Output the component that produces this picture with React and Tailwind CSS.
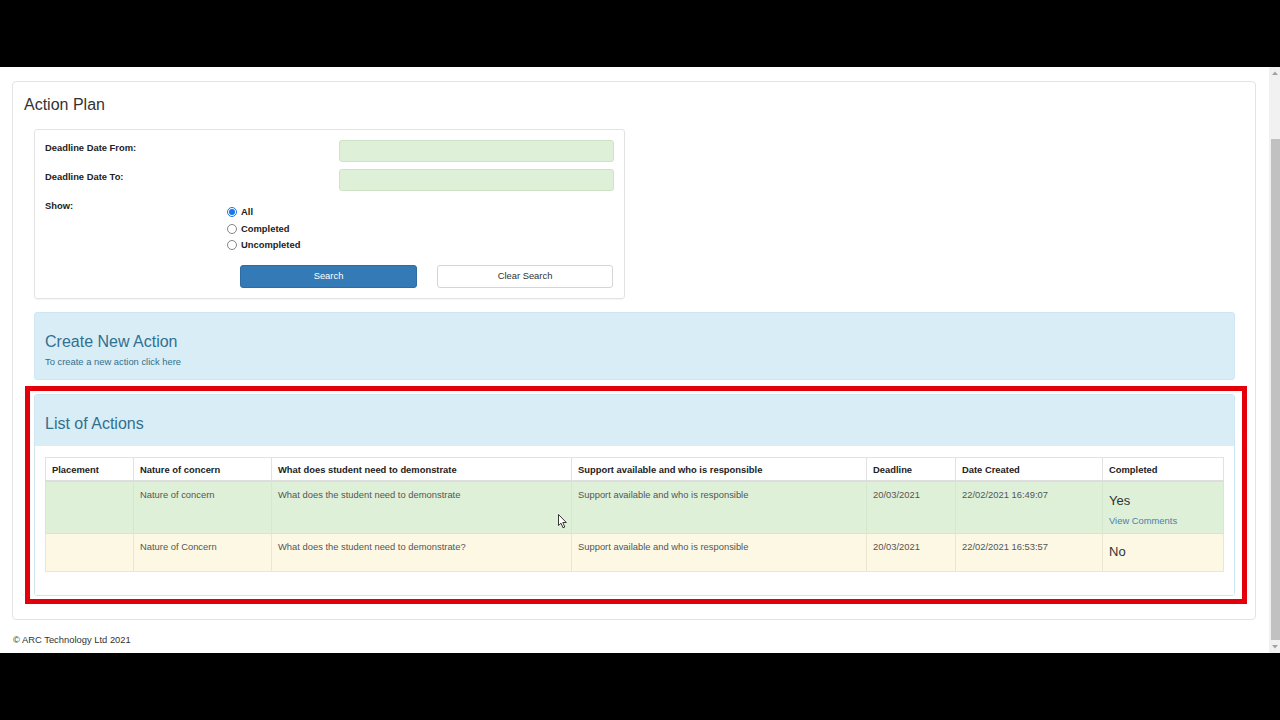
import React from "react";

function Radio({ checked, label }) {
  return (
    <div className="flex items-center h-[16.5px]">
      {checked ? (
        <span className="w-[10px] h-[10px] rounded-full border border-[#1a73e8] bg-white flex items-center justify-center">
          <span className="w-[6px] h-[6px] rounded-full bg-[#1a73e8]" />
        </span>
      ) : (
        <span className="w-[10px] h-[10px] rounded-full border border-[#858585] bg-white" />
      )}
      <span className="ml-[4px] text-[9.4px] font-bold text-[#222]">{label}</span>
    </div>
  );
}

export default function App() {
  const font = { fontFamily: '"Liberation Sans", Arial, sans-serif' };
  const headers = [
    "Placement",
    "Nature of concern",
    "What does student need to demonstrate",
    "Support available and who is responsible",
    "Deadline",
    "Date Created",
    "Completed",
  ];
  return (
    <div className="w-[1280px] h-[720px] bg-black flex flex-col overflow-hidden" style={font}>
      <div className="h-[67px] bg-black shrink-0" />
      <div className="h-[586px] bg-white flex shrink-0 overflow-hidden">
        <div className="flex-1 relative">
          <div className="mt-[14px] ml-[12px] mr-[13px] border border-[#e3e3e3] rounded-[4px] pl-[11px] pr-[11px] pt-[13px] pb-[23px]">
            <h1 className="text-[16px] leading-[20px] text-[#333]">Action Plan</h1>
            <div className="pl-[10px] pr-[9px]">
              {/* filter */}
              <div className="mt-[14px] w-[591px] border border-[#e3e3e3] rounded-[3px] shadow-[0_1px_1px_rgba(0,0,0,0.04)] pl-[10px] pt-[10px] pb-[10px]">
                <div className="flex items-start">
                  <div className="w-[294px] pt-[1px] text-[9.4px] font-bold text-[#222] leading-[14px]">Deadline Date From:</div>
                  <div className="w-[275px] h-[22px] bg-[#dff0d8] border border-[#cfe2c6] rounded-[3px]" />
                </div>
                <div className="flex items-start mt-[7px]">
                  <div className="w-[294px] pt-[1px] text-[9.4px] font-bold text-[#222] leading-[14px]">Deadline Date To:</div>
                  <div className="w-[275px] h-[22px] bg-[#dff0d8] border border-[#cfe2c6] rounded-[3px]" />
                </div>
                <div className="flex items-start mt-[7px]">
                  <div className="w-[182px] pt-[1px] text-[9.4px] font-bold text-[#222] leading-[14px]">Show:</div>
                  <div className="pt-[6px] flex flex-col">
                    <Radio checked label="All" />
                    <Radio label="Completed" />
                    <Radio label="Uncompleted" />
                  </div>
                </div>
                <div className="flex ml-[195px] mt-[11px] gap-[20px]">
                  <div className="w-[177px] h-[23px] bg-[#337ab7] border border-[#2e6da4] rounded-[3px] flex items-center justify-center text-[9.4px] text-white">Search</div>
                  <div className="w-[176px] h-[23px] bg-white border border-[#d5d5d5] rounded-[3px] flex items-center justify-center text-[9.4px] text-[#333]">Clear Search</div>
                </div>
              </div>

              {/* create */}
              <div className="mt-[13px] h-[68px] bg-[#d9edf7] border border-[#cfe6f2] rounded-[3px] pl-[10px] pt-[19px]">
                <div className="text-[16px] leading-[20px] text-[#31708f]">Create New Action</div>
                <div className="mt-[3px] text-[9.4px] leading-[14px] text-[#31708f]">To create a new action click here</div>
              </div>

              {/* list */}
              <div className="relative mt-[14px]">
                <div className="border border-[#cfe6f2] rounded-[3px] overflow-hidden">
                  <div className="h-[51px] bg-[#d9edf7] pl-[10px] pt-[19px]">
                    <div className="text-[16px] leading-[20px] text-[#31708f]">List of Actions</div>
                  </div>
                  <div className="px-[10px] pt-[11px] pb-[23px] bg-white">
                    <table className="w-[1178px] table-fixed border-collapse text-[9.4px]">
                      <colgroup>
                        <col className="w-[88px]" />
                        <col className="w-[138px]" />
                        <col className="w-[300px]" />
                        <col className="w-[295px]" />
                        <col className="w-[89px]" />
                        <col className="w-[147px]" />
                        <col className="w-[121px]" />
                      </colgroup>
                      <thead>
                        <tr className="h-[24px] bg-white">
                          {headers.map((h) => (
                            <th key={h} className="border border-[#e2e2e2] border-b-2 border-b-[#dddddd] px-[6px] pt-[2px] text-left font-bold text-[#222] align-middle leading-[14px]">{h}</th>
                          ))}
                        </tr>
                      </thead>
                      <tbody>
                        <tr className="h-[52px] bg-[#dff0d8] text-[#555]">
                          <td className="border border-[#d6e6cf] px-[6px] pt-[6px] align-top"></td>
                          <td className="border border-[#d6e6cf] px-[6px] pt-[6px] align-top leading-[14px]">Nature of concern</td>
                          <td className="border border-[#d6e6cf] px-[6px] pt-[6px] align-top leading-[14px]">What does the student need to demonstrate</td>
                          <td className="border border-[#d6e6cf] px-[6px] pt-[6px] align-top leading-[14px]">Support available and who is responsible</td>
                          <td className="border border-[#d6e6cf] px-[6px] pt-[6px] align-top leading-[14px]">20/03/2021</td>
                          <td className="border border-[#d6e6cf] px-[6px] pt-[6px] align-top leading-[14px]">22/02/2021 16:49:07</td>
                          <td className="border border-[#d6e6cf] px-[6px] pt-[6px] align-top">
                            <div className="mt-[4px] text-[13px] leading-[18px] text-[#333]">Yes</div>
                            <div className="mt-[4px] text-[9.4px] leading-[14px] text-[#4a7fae]">View Comments</div>
                          </td>
                        </tr>
                        <tr className="h-[38px] bg-[#fcf8e3] text-[#555]">
                          <td className="border border-[#ebe6cf] px-[6px] pt-[6px] align-top"></td>
                          <td className="border border-[#ebe6cf] px-[6px] pt-[6px] align-top leading-[14px]">Nature of Concern</td>
                          <td className="border border-[#ebe6cf] px-[6px] pt-[6px] align-top leading-[14px]">What does the student need to demonstrate?</td>
                          <td className="border border-[#ebe6cf] px-[6px] pt-[6px] align-top leading-[14px]">Support available and who is responsible</td>
                          <td className="border border-[#ebe6cf] px-[6px] pt-[6px] align-top leading-[14px]">20/03/2021</td>
                          <td className="border border-[#ebe6cf] px-[6px] pt-[6px] align-top leading-[14px]">22/02/2021 16:53:57</td>
                          <td className="border border-[#ebe6cf] px-[6px] pt-[6px] align-top">
                            <div className="mt-[3px] text-[13px] leading-[18px] text-[#333]">No</div>
                          </td>
                        </tr>
                      </tbody>
                    </table>
                  </div>
                </div>
                {/* red annotation */}
                <div className="absolute -left-[9px] -right-[12px] -top-[8px] -bottom-[8px] border-[5px] border-[#e3000b] pointer-events-none" />
              </div>
            </div>
          </div>
          <div className="ml-[13px] mt-[13px] text-[9.4px] leading-[14px] text-[#333]">© ARC Technology Ltd 2021</div>

          {/* mouse cursor */}
          <svg className="absolute left-[558px] top-[447px]" width="10" height="15" viewBox="0 0 10 15">
            <path d="M0.5 0.5 L0.5 11.5 L3 9.2 L5 13.8 L6.8 13 L4.8 8.5 L8.3 8.5 Z" fill="white" stroke="#222" strokeWidth="0.9" strokeLinejoin="round" />
          </svg>
        </div>

        {/* scrollbar */}
        <div className="w-[12px] bg-[#f1f1f1] flex flex-col items-center">
          <svg width="12" height="12" viewBox="0 0 12 12">
            <path d="M3 8 L6 4.5 L9 8 Z" fill="#a3a3a3" />
          </svg>
          <div className="mt-[60px] w-[9px] h-[501px] bg-[#c1c1c1]" />
          <div className="flex-1" />
          <svg width="12" height="12" viewBox="0 0 12 12">
            <path d="M3 4 L6 7.5 L9 4 Z" fill="#a3a3a3" />
          </svg>
        </div>
      </div>
      <div className="h-[67px] bg-black shrink-0" />
    </div>
  );
}
